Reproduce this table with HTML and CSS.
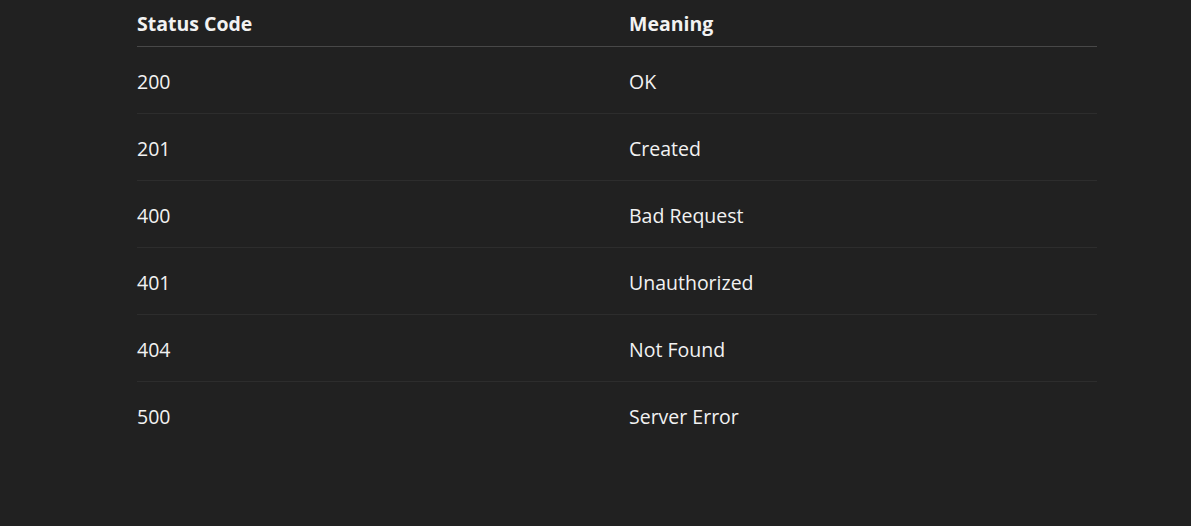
FILE: index.html
```html
<!DOCTYPE html>
<html>
<head>
<meta charset="utf-8">
<link rel="stylesheet" href="styles.css">
</head>
<body>
<div class="wrap">
  <table class="codes">
    <thead>
      <tr><th>Status Code</th><th>Meaning</th></tr>
    </thead>
    <tbody>
      <tr><td>200</td><td>OK</td></tr>
      <tr><td>201</td><td>Created</td></tr>
      <tr><td>400</td><td>Bad Request</td></tr>
      <tr><td>401</td><td>Unauthorized</td></tr>
      <tr><td>404</td><td>Not Found</td></tr>
      <tr><td>500</td><td>Server Error</td></tr>
    </tbody>
  </table>
</div>
</body>
</html>
```
FILE: styles.css
```css
html, body {
  margin: 0;
  padding: 0;
  background: #212121;
  height: 100%;
}
body {
  font-family: "Open Sans", "Noto Sans", sans-serif;
  color: #f2f2f2;
}
.wrap {
  padding-left: 137px;
  width: 960px;
}
.codes {
  width: 960px;
  border-collapse: collapse;
  table-layout: fixed;
}
.codes th, .codes td {
  text-align: left;
  padding: 0;
  font-size: 19.5px;
  line-height: 27px;
}
.codes th:first-child, .codes td:first-child {
  width: 492px;
}
.codes th {
  font-weight: 700;
  padding-top: 10px;
  padding-bottom: 9px;
  border-bottom: 1px solid #484848;
}
.codes td {
  padding-top: 21px;
  padding-bottom: 18px;
  border-bottom: 1px solid #2d2d2d;
}
.codes tbody tr:last-child td {
  border-bottom: none;
}
```
